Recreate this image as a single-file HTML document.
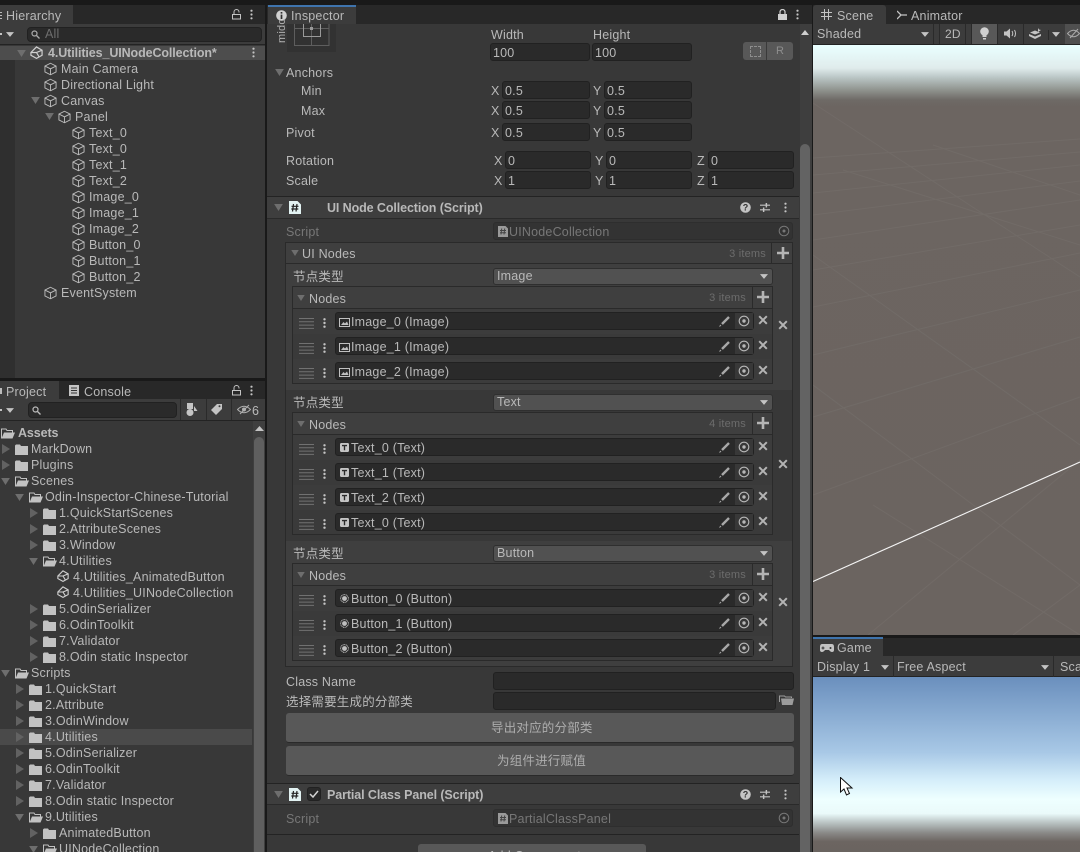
<!DOCTYPE html>
<html><head><meta charset="utf-8"><style>
html,body{margin:0;padding:0;background:#191919}
#r{position:relative;width:1080px;height:852px;overflow:hidden;background:#191919;font:12.5px/16px "Liberation Sans","Noto Sans CJK SC",sans-serif;color:#b9b9b9}
#r div,#r svg,#r span{position:absolute}
.t{white-space:nowrap;letter-spacing:.2px}
.b{font-weight:bold;letter-spacing:-.1px}
.d{color:#777}
.f{background:#2a2a2a;border:1px solid #212121;box-sizing:border-box;border-radius:3px}
.dis{background:#333;border:1px solid #2e2e2e;box-sizing:border-box;border-radius:3px}
.dd{background:#515151;border:1px solid #2f2f2f;box-sizing:border-box;border-radius:3px}
.h{background:#3f3f3f;box-sizing:border-box;border:1px solid #232323}
.btn{background:#585858;border-bottom:1px solid #2a2a2a;box-sizing:border-box;border-radius:3px}
</style></head><body><div id="r">
<svg width="0" height="0" style="left:0;top:0"><defs>
<symbol id="cube" viewBox="0 0 14 14"><path d="M7 .8 13 3.8v6.4L7 13.2 1 10.2V3.8zM1 3.8l6 3 6-3M7 6.8v6.4" fill="none" stroke="#bcbcbc" stroke-width="1"/></symbol>
<symbol id="down" viewBox="0 0 10 8"><path d="M0 0h10L5 8z" fill="#6e6e6e"/></symbol>
<symbol id="right" viewBox="0 0 8 10"><path d="M0 0v10l8-5z" fill="#626262"/></symbol>
<symbol id="wd" viewBox="0 0 10 6"><path d="M0 0h10L5 6z" fill="#c4c4c4"/></symbol>
<symbol id="fc" viewBox="0 0 13 11"><path d="M0 1.500 1 .5h4l1 1.500h7v9H0z" fill="#c2c2c2"/></symbol>
<symbol id="fo" viewBox="0 0 14 11"><path d="M.5 10.500V1h4.500l1 1.500h5.500V4.500" fill="none" stroke="#c2c2c2"/><path d="M3 4.500h11l-2.500 6H.5z" fill="#c2c2c2"/></symbol>
<symbol id="uni" viewBox="0 0 14 14"><path d="M7 1 13 4.500V10L7 13.300 1 10V7L7 1zM7 7 13 4.500M7 7l3 5M7 7H1" fill="none" stroke="#d0d0d0" stroke-width="1.300"/></symbol>
<symbol id="dots" viewBox="0 0 3 13"><circle cx="1.500" cy="2" r="1.300" fill="#c4c4c4"/><circle cx="1.500" cy="6.500" r="1.300" fill="#c4c4c4"/><circle cx="1.500" cy="11" r="1.300" fill="#c4c4c4"/></symbol>
<symbol id="lock" viewBox="0 0 9 11"><path d="M2 5V3a2.500 2.500 0 0 1 5 0v.5" fill="none" stroke="#c4c4c4"/><path d="M.5 5.500h8v4.500h-8z" fill="none" stroke="#c4c4c4"/></symbol>
<symbol id="lockf" viewBox="0 0 9 11"><path d="M2 5V3a2.500 2.500 0 0 1 5 0v2" fill="none" stroke="#d0d0d0" stroke-width="1.200"/><path d="M0 5h9v6H0z" fill="#d0d0d0"/></symbol>
<symbol id="x" viewBox="0 0 10 10"><path d="M1.200 1.200 8.800 8.800M8.800 1.200 1.200 8.800" stroke="#b4b4b4" stroke-width="2"/></symbol>
<symbol id="plus" viewBox="0 0 12 12"><path d="M6 0v12M0 6h12" stroke="#b4b4b4" stroke-width="2.600"/></symbol>
<symbol id="tg" viewBox="0 0 12 12"><circle cx="6" cy="6" r="4.800" fill="none" stroke="#b8b8b8" stroke-width="1.100"/><circle cx="6" cy="6" r="1.700" fill="#b8b8b8"/></symbol>
<symbol id="tgd" viewBox="0 0 12 12"><circle cx="6" cy="6" r="4.800" fill="none" stroke="#777" stroke-width="1"/><circle cx="6" cy="6" r="1.500" fill="#777"/></symbol>
<symbol id="pen" viewBox="0 0 12 12"><path d="M3 9 10 2" stroke="#a8a8a8" stroke-width="2.400"/><path d="M.5 11.500 2 10" stroke="#a8a8a8"/></symbol>
<symbol id="hd" viewBox="0 0 15 11"><path d="M0 .5h15M0 3.800h15M0 7.100h15M0 10.400h15" stroke="#717171"/></symbol>
<symbol id="idots" viewBox="0 0 3 10"><circle cx="1.500" cy="1.300" r="1.200" fill="#c4c4c4"/><circle cx="1.500" cy="5" r="1.200" fill="#c4c4c4"/><circle cx="1.500" cy="8.700" r="1.200" fill="#c4c4c4"/></symbol>
<symbol id="img" viewBox="0 0 11 9"><path d="M.5.500h10v8H.5z" fill="none" stroke="#c0c0c0"/><path d="M2 7l2.500-3 1.500 1.500L8 3.500 9.500 7z" fill="#c0c0c0"/></symbol>
<symbol id="ti" viewBox="0 0 10 10"><path d="M0 1 1 0h8l1 1v8l-1 1H1L0 9z" fill="#c4c4c4"/><path d="M2.200 2.800h5.600M5 2.800V8" stroke="#2a2a2a" stroke-width="1.500"/></symbol>
<symbol id="bi" viewBox="0 0 10 10"><circle cx="5" cy="5" r="4.300" fill="none" stroke="#c0c0c0" stroke-width="1" stroke-dasharray="1.200 .6"/><circle cx="5" cy="5" r="2.700" fill="#c0c0c0"/></symbol>
<symbol id="sc" viewBox="0 0 12 13"><path d="M0 0h8.500L12 3.500V13H0z" fill="#e2f2f2"/><path d="M4.500 3 3.500 10.500M8 3 7 10.500M2.500 5.300h7M2.300 8h7" stroke="#222" stroke-width="1.200"/></symbol>
<symbol id="scd" viewBox="0 0 10 11"><path d="M0 0h7.500L10 2.500V11H0z" fill="#9a9a9a"/><path d="M3.700 2.500 3 8.500M6.700 2.500 6 8.500M2 4.500h6M2 6.700h6" stroke="#444" stroke-width="1"/></symbol>
<symbol id="help" viewBox="0 0 11 11"><circle cx="5.500" cy="5.500" r="5.300" fill="#c4c4c4"/><text x="5.500" y="8.700" text-anchor="middle" font-size="9" font-weight="bold" font-family="Liberation Sans" fill="#333">?</text></symbol>
<symbol id="sl" viewBox="0 0 11 11"><path d="M0 3h11M0 8h11" stroke="#c4c4c4" stroke-width="1.200"/><path d="M7 .5v5M4 5.500v5" stroke="#c4c4c4" stroke-width="1.600"/></symbol>
<symbol id="info" viewBox="0 0 11 11"><circle cx="5.500" cy="5.500" r="5.300" fill="#d0d0d0"/><path d="M5.500 2v1.600M5.500 4.600V9" stroke="#2e2e2e" stroke-width="1.700"/></symbol>
</defs></svg>

<!-- ===== Hierarchy ===== -->
<div style="left:0;top:5px;width:265px;height:19px;background:#282828"></div>
<div style="left:0;top:5px;width:73px;height:19px;background:#3c3c3c"></div>
<svg style="left:0;top:12px" width="2" height="7" viewBox="0 0 2 7"><path d="M0 .5h2M0 3.500h2M0 6.500h2" stroke="#bbb"/></svg>
<div class="t" style="left:6px;top:8px">Hierarchy</div>
<svg style="left:232px;top:9px" width="9" height="11"><use href="#lock"/></svg>
<svg style="left:250px;top:9px" width="3" height="11"><use href="#dots"/></svg>
<div style="left:0;top:24px;width:265px;height:20px;background:#3c3c3c;border-bottom:1px solid #232323"></div>
<div style="left:0;top:33px;width:2px;height:2px;background:#c4c4c4"></div>
<svg style="left:6px;top:32px" width="8" height="5"><use href="#wd"/></svg>
<div class="f" style="left:27px;top:27px;width:235px;height:15px;border-radius:4px"></div>
<svg style="left:31px;top:30px" width="9" height="9" viewBox="0 0 9 9"><circle cx="3.500" cy="3.500" r="2.500" fill="none" stroke="#aaa" stroke-width="1.200"/><path d="M5.500 5.500 8.500 8.500" stroke="#aaa" stroke-width="1.300"/></svg>
<div class="t d" style="left:45px;top:26px;color:#6e6e6e">All</div>
<div style="left:0;top:45px;width:265px;height:333px;background:#383838"></div>
<div style="left:0;top:60px;width:15px;height:318px;background:#2f2f2f"></div>
<div style="left:0;top:46px;width:265px;height:14px;background:#4d4d4d"></div>
<svg style="left:17px;top:50px" width="9" height="7"><use href="#down"/></svg>
<svg style="left:30px;top:46px" width="13" height="13"><use href="#uni"/></svg>
<div class="t b" style="left:48px;top:45px">4.Utilities_UINodeCollection*</div>
<svg style="left:252px;top:47px" width="3" height="11"><use href="#dots"/></svg>

<svg style="left:44px;top:62px" width="13" height="14"><use href="#cube"/></svg><div class="t" style="left:61px;top:61px">Main Camera</div>
<svg style="left:44px;top:78px" width="13" height="14"><use href="#cube"/></svg><div class="t" style="left:61px;top:77px">Directional Light</div>
<svg style="left:31px;top:97px" width="9" height="7"><use href="#down"/></svg>
<svg style="left:44px;top:94px" width="13" height="14"><use href="#cube"/></svg><div class="t" style="left:61px;top:93px">Canvas</div>
<svg style="left:45px;top:113px" width="9" height="7"><use href="#down"/></svg>
<svg style="left:58px;top:110px" width="13" height="14"><use href="#cube"/></svg><div class="t" style="left:75px;top:109px">Panel</div>
<svg style="left:72px;top:126px" width="13" height="14"><use href="#cube"/></svg><div class="t" style="left:89px;top:125px">Text_0</div>
<svg style="left:72px;top:142px" width="13" height="14"><use href="#cube"/></svg><div class="t" style="left:89px;top:141px">Text_0</div>
<svg style="left:72px;top:158px" width="13" height="14"><use href="#cube"/></svg><div class="t" style="left:89px;top:157px">Text_1</div>
<svg style="left:72px;top:174px" width="13" height="14"><use href="#cube"/></svg><div class="t" style="left:89px;top:173px">Text_2</div>
<svg style="left:72px;top:190px" width="13" height="14"><use href="#cube"/></svg><div class="t" style="left:89px;top:189px">Image_0</div>
<svg style="left:72px;top:206px" width="13" height="14"><use href="#cube"/></svg><div class="t" style="left:89px;top:205px">Image_1</div>
<svg style="left:72px;top:222px" width="13" height="14"><use href="#cube"/></svg><div class="t" style="left:89px;top:221px">Image_2</div>
<svg style="left:72px;top:238px" width="13" height="14"><use href="#cube"/></svg><div class="t" style="left:89px;top:237px">Button_0</div>
<svg style="left:72px;top:254px" width="13" height="14"><use href="#cube"/></svg><div class="t" style="left:89px;top:253px">Button_1</div>
<svg style="left:72px;top:270px" width="13" height="14"><use href="#cube"/></svg><div class="t" style="left:89px;top:269px">Button_2</div>
<svg style="left:44px;top:286px" width="13" height="14"><use href="#cube"/></svg><div class="t" style="left:61px;top:285px">EventSystem</div>

<!-- ===== Project ===== -->
<div style="left:0;top:381px;width:265px;height:18px;background:#282828"></div>
<div style="left:0;top:381px;width:59px;height:18px;background:#3c3c3c"></div>
<div style="left:0;top:388px;width:2px;height:6px;background:#bbb"></div>
<div class="t" style="left:6px;top:384px">Project</div>
<svg style="left:69px;top:385px" width="10" height="11" viewBox="0 0 10 11"><path d="M0 0h10v11H0z" fill="#c4c4c4"/><path d="M2 3h6M2 5.500h6M2 8h6" stroke="#333"/></svg>
<div class="t" style="left:84px;top:384px">Console</div>
<svg style="left:232px;top:385px" width="9" height="11"><use href="#lock"/></svg>
<svg style="left:250px;top:385px" width="3" height="11"><use href="#dots"/></svg>
<div style="left:0;top:399px;width:265px;height:21px;background:#3c3c3c;border-bottom:1px solid #232323"></div>
<div style="left:0;top:409px;width:2px;height:2px;background:#c4c4c4"></div>
<svg style="left:6px;top:408px" width="8" height="5"><use href="#wd"/></svg>
<div class="f" style="left:28px;top:402px;width:149px;height:16px;border-radius:4px"></div>
<svg style="left:32px;top:406px" width="9" height="9" viewBox="0 0 9 9"><circle cx="3.500" cy="3.500" r="2.500" fill="none" stroke="#bbb" stroke-width="1.200"/><path d="M5.500 5.500 8.500 8.500" stroke="#bbb" stroke-width="1.300"/></svg>
<div style="left:180px;top:399px;width:1px;height:21px;background:#2a2a2a"></div>
<div style="left:206px;top:399px;width:1px;height:21px;background:#2a2a2a"></div>
<div style="left:231px;top:399px;width:1px;height:21px;background:#2a2a2a"></div>
<svg style="left:186px;top:403px" width="12" height="13" viewBox="0 0 12 13"><path d="M1 0h6v6H1z" fill="#c4c4c4"/><circle cx="4" cy="9.500" r="3.500" fill="#c4c4c4"/><path d="M8 3l3.500 5H8z" fill="#c4c4c4"/></svg>
<svg style="left:211px;top:403px" width="11" height="12" viewBox="0 0 11 12"><path d="M6 1h5v5l-6 6-5-5z" fill="#c4c4c4"/><circle cx="8.500" cy="3.300" r="1" fill="#3c3c3c"/></svg>
<svg style="left:237px;top:404px" width="14" height="11" viewBox="0 0 14 11"><path d="M.5 5.500Q7-1 13.500 5.500 7 12 .5 5.500zM3 10 12 1" fill="none" stroke="#b0b0b0"/><circle cx="7" cy="5.500" r="2" fill="#b0b0b0"/></svg>
<div class="t" style="left:252px;top:403px">6</div>

<div style="left:0;top:421px;width:265px;height:431px;background:#383838"></div>
<div style="left:0;top:729px;width:252px;height:16px;background:#4a4a4a"></div>
<div style="left:253px;top:421px;width:12px;height:431px;background:#3f3f3f"></div>
<svg style="left:255px;top:426px" width="9" height="5" viewBox="0 0 9 5"><path d="M0 5h9L4.500 0z" fill="#c4c4c4"/></svg>
<div style="left:254px;top:437px;width:10px;height:415px;background:#5f5f5f;border-radius:5px 5px 0 0"></div>

<svg style="left:1px;top:428px" width="14" height="11"><use href="#fo"/></svg><div class="t b" style="left:18px;top:425px">Assets</div>
<svg style="left:2px;top:444px" width="8" height="10"><use href="#right"/></svg><svg style="left:15px;top:444px" width="13" height="11"><use href="#fc"/></svg><div class="t" style="left:31px;top:441px">MarkDown</div>
<svg style="left:2px;top:460px" width="8" height="10"><use href="#right"/></svg><svg style="left:15px;top:460px" width="13" height="11"><use href="#fc"/></svg><div class="t" style="left:31px;top:457px">Plugins</div>
<svg style="left:1px;top:478px" width="9" height="7"><use href="#down"/></svg><svg style="left:15px;top:476px" width="14" height="11"><use href="#fo"/></svg><div class="t" style="left:31px;top:473px">Scenes</div>
<svg style="left:15px;top:494px" width="9" height="7"><use href="#down"/></svg><svg style="left:29px;top:492px" width="14" height="11"><use href="#fo"/></svg><div class="t" style="left:45px;top:489px">Odin-Inspector-Chinese-Tutorial</div>
<svg style="left:30px;top:508px" width="8" height="10"><use href="#right"/></svg><svg style="left:43px;top:508px" width="13" height="11"><use href="#fc"/></svg><div class="t" style="left:59px;top:505px">1.QuickStartScenes</div>
<svg style="left:30px;top:524px" width="8" height="10"><use href="#right"/></svg><svg style="left:43px;top:524px" width="13" height="11"><use href="#fc"/></svg><div class="t" style="left:59px;top:521px">2.AttributeScenes</div>
<svg style="left:30px;top:540px" width="8" height="10"><use href="#right"/></svg><svg style="left:43px;top:540px" width="13" height="11"><use href="#fc"/></svg><div class="t" style="left:59px;top:537px">3.Window</div>
<svg style="left:29px;top:558px" width="9" height="7"><use href="#down"/></svg><svg style="left:43px;top:556px" width="14" height="11"><use href="#fo"/></svg><div class="t" style="left:59px;top:553px">4.Utilities</div>
<svg style="left:57px;top:570px" width="12" height="12"><use href="#uni"/></svg><div class="t" style="left:73px;top:569px">4.Utilities_AnimatedButton</div>
<svg style="left:57px;top:586px" width="12" height="12"><use href="#uni"/></svg><div class="t" style="left:73px;top:585px">4.Utilities_UINodeCollection</div>
<svg style="left:30px;top:604px" width="8" height="10"><use href="#right"/></svg><svg style="left:43px;top:604px" width="13" height="11"><use href="#fc"/></svg><div class="t" style="left:59px;top:601px">5.OdinSerializer</div>
<svg style="left:30px;top:620px" width="8" height="10"><use href="#right"/></svg><svg style="left:43px;top:620px" width="13" height="11"><use href="#fc"/></svg><div class="t" style="left:59px;top:617px">6.OdinToolkit</div>
<svg style="left:30px;top:636px" width="8" height="10"><use href="#right"/></svg><svg style="left:43px;top:636px" width="13" height="11"><use href="#fc"/></svg><div class="t" style="left:59px;top:633px">7.Validator</div>
<svg style="left:30px;top:652px" width="8" height="10"><use href="#right"/></svg><svg style="left:43px;top:652px" width="13" height="11"><use href="#fc"/></svg><div class="t" style="left:59px;top:649px">8.Odin static Inspector</div>
<svg style="left:1px;top:670px" width="9" height="7"><use href="#down"/></svg><svg style="left:15px;top:668px" width="14" height="11"><use href="#fo"/></svg><div class="t" style="left:31px;top:665px">Scripts</div>
<svg style="left:16px;top:684px" width="8" height="10"><use href="#right"/></svg><svg style="left:29px;top:684px" width="13" height="11"><use href="#fc"/></svg><div class="t" style="left:45px;top:681px">1.QuickStart</div>
<svg style="left:16px;top:700px" width="8" height="10"><use href="#right"/></svg><svg style="left:29px;top:700px" width="13" height="11"><use href="#fc"/></svg><div class="t" style="left:45px;top:697px">2.Attribute</div>
<svg style="left:16px;top:716px" width="8" height="10"><use href="#right"/></svg><svg style="left:29px;top:716px" width="13" height="11"><use href="#fc"/></svg><div class="t" style="left:45px;top:713px">3.OdinWindow</div>
<svg style="left:16px;top:732px" width="8" height="10"><use href="#right"/></svg><svg style="left:29px;top:732px" width="13" height="11"><use href="#fc"/></svg><div class="t" style="left:45px;top:729px">4.Utilities</div>
<svg style="left:16px;top:748px" width="8" height="10"><use href="#right"/></svg><svg style="left:29px;top:748px" width="13" height="11"><use href="#fc"/></svg><div class="t" style="left:45px;top:745px">5.OdinSerializer</div>
<svg style="left:16px;top:764px" width="8" height="10"><use href="#right"/></svg><svg style="left:29px;top:764px" width="13" height="11"><use href="#fc"/></svg><div class="t" style="left:45px;top:761px">6.OdinToolkit</div>
<svg style="left:16px;top:780px" width="8" height="10"><use href="#right"/></svg><svg style="left:29px;top:780px" width="13" height="11"><use href="#fc"/></svg><div class="t" style="left:45px;top:777px">7.Validator</div>
<svg style="left:16px;top:796px" width="8" height="10"><use href="#right"/></svg><svg style="left:29px;top:796px" width="13" height="11"><use href="#fc"/></svg><div class="t" style="left:45px;top:793px">8.Odin static Inspector</div>
<svg style="left:15px;top:814px" width="9" height="7"><use href="#down"/></svg><svg style="left:29px;top:812px" width="14" height="11"><use href="#fo"/></svg><div class="t" style="left:45px;top:809px">9.Utilities</div>
<svg style="left:30px;top:828px" width="8" height="10"><use href="#right"/></svg><svg style="left:43px;top:828px" width="13" height="11"><use href="#fc"/></svg><div class="t" style="left:59px;top:825px">AnimatedButton</div>
<svg style="left:29px;top:846px" width="9" height="7"><use href="#down"/></svg><svg style="left:43px;top:844px" width="14" height="11"><use href="#fo"/></svg><div class="t" style="left:59px;top:841px">UINodeCollection</div>

<!-- ===== Inspector ===== -->
<div style="left:267px;top:5px;width:545px;height:19px;background:#282828"></div>
<div style="left:268px;top:5px;width:88px;height:19px;background:#3c3c3c;border-top:2px solid #3f74ad;box-sizing:border-box"></div>
<svg style="left:276px;top:10px" width="11" height="11"><use href="#info"/></svg>
<div class="t" style="left:291px;top:8px">Inspector</div>
<svg style="left:778px;top:9px" width="9" height="11"><use href="#lockf"/></svg>
<svg style="left:796px;top:9px" width="3" height="11"><use href="#dots"/></svg>
<div style="left:267px;top:24px;width:545px;height:828px;background:#383838"></div>
<div style="left:800px;top:24px;width:12px;height:828px;background:#3e3e3e"></div>
<svg style="left:801px;top:30px" width="8" height="5" viewBox="0 0 8 5"><path d="M0 5h8L4 0z" fill="#d0d0d0"/></svg>
<div style="left:800px;top:144px;width:10px;height:708px;background:#636363;border-radius:5px 5px 0 0"></div>

<div style="left:287px;top:24px;width:49px;height:28px;background:#323232"></div>
<svg style="left:294px;top:24px" width="36" height="22" viewBox="0 0 36 22"><path d="M.5 0v21.500h34.500V0M0 4.500h35M17.500 0v21.500" fill="none" stroke="#5e5e5e"/><path d="M9.500 0v12.500h17V0" fill="none" stroke="#9a9a9a"/><rect x="16" y="3" width="3" height="3" fill="#9a9a9a"/></svg>
<div class="t" style="left:273px;top:26px;transform:rotate(-90deg);transform-origin:center;width:18px;font-size:11px;color:#b0b0b0;text-align:center;line-height:16px">midc</div>

<div class="t" style="left:491px;top:27px">Width</div>
<div class="t" style="left:593px;top:27px">Height</div>
<div class="f" style="left:490px;top:43px;width:100px;height:18px"></div><div class="t" style="left:493px;top:45px">100</div>
<div class="f" style="left:592px;top:43px;width:100px;height:18px"></div><div class="t" style="left:595px;top:45px">100</div>
<div style="left:743px;top:42px;width:50px;height:18px;background:#585858;border-radius:3px"></div>
<div style="left:766px;top:42px;width:1px;height:18px;background:#3a3a3a"></div>
<div style="left:750px;top:46px;width:9px;height:9px;border:1px dashed #8e8e8e"></div>
<div class="t" style="left:776px;top:43px;color:#8e8e8e;font-size:11px">R</div>

<svg style="left:275px;top:69px" width="9" height="7"><use href="#down"/></svg>
<div class="t" style="left:286px;top:65px">Anchors</div>
<div class="t" style="left:301px;top:83px">Min</div>
<div class="t" style="left:301px;top:103px">Max</div>
<div class="t" style="left:286px;top:125px">Pivot</div>
<div class="t" style="left:286px;top:153px">Rotation</div>
<div class="t" style="left:286px;top:173px">Scale</div>

<div class="t" style="left:491px;top:83px">X</div><div class="f" style="left:502px;top:81px;width:88px;height:18px"></div><div class="t" style="left:505px;top:83px">0.5</div>
<div class="t" style="left:593px;top:83px">Y</div><div class="f" style="left:604px;top:81px;width:88px;height:18px"></div><div class="t" style="left:607px;top:83px">0.5</div>
<div class="t" style="left:491px;top:103px">X</div><div class="f" style="left:502px;top:101px;width:88px;height:18px"></div><div class="t" style="left:505px;top:103px">0.5</div>
<div class="t" style="left:593px;top:103px">Y</div><div class="f" style="left:604px;top:101px;width:88px;height:18px"></div><div class="t" style="left:607px;top:103px">0.5</div>
<div class="t" style="left:491px;top:125px">X</div><div class="f" style="left:502px;top:123px;width:88px;height:18px"></div><div class="t" style="left:505px;top:125px">0.5</div>
<div class="t" style="left:593px;top:125px">Y</div><div class="f" style="left:604px;top:123px;width:88px;height:18px"></div><div class="t" style="left:607px;top:125px">0.5</div>

<div class="t" style="left:494px;top:153px">X</div><div class="f" style="left:505px;top:151px;width:86px;height:18px"></div><div class="t" style="left:508px;top:153px">0</div>
<div class="t" style="left:595px;top:153px">Y</div><div class="f" style="left:606px;top:151px;width:86px;height:18px"></div><div class="t" style="left:609px;top:153px">0</div>
<div class="t" style="left:697px;top:153px">Z</div><div class="f" style="left:708px;top:151px;width:86px;height:18px"></div><div class="t" style="left:711px;top:153px">0</div>
<div class="t" style="left:494px;top:173px">X</div><div class="f" style="left:505px;top:171px;width:86px;height:18px"></div><div class="t" style="left:508px;top:173px">1</div>
<div class="t" style="left:595px;top:173px">Y</div><div class="f" style="left:606px;top:171px;width:86px;height:18px"></div><div class="t" style="left:609px;top:173px">1</div>
<div class="t" style="left:697px;top:173px">Z</div><div class="f" style="left:708px;top:171px;width:86px;height:18px"></div><div class="t" style="left:711px;top:173px">1</div>

<!-- component header -->
<div style="left:267px;top:196px;width:532px;height:23px;background:#3e3e3e;border-top:1px solid #232323;border-bottom:1px solid #2a2a2a;box-sizing:border-box"></div>
<svg style="left:274px;top:204px" width="9" height="7"><use href="#down"/></svg>
<svg style="left:289px;top:201px" width="12" height="13"><use href="#sc"/></svg>
<div class="t b" style="left:327px;top:200px">UI Node Collection (Script)</div>
<svg style="left:740px;top:202px" width="11" height="11"><use href="#help"/></svg>
<svg style="left:760px;top:202px" width="10" height="11"><use href="#sl"/></svg>
<svg style="left:784px;top:202px" width="3" height="11"><use href="#dots"/></svg>

<div class="t d" style="left:286px;top:224px">Script</div>
<div class="dis" style="left:493px;top:222px;width:300px;height:18px"></div>
<svg style="left:498px;top:226px" width="10" height="11"><use href="#scd"/></svg>
<div class="t d" style="left:509px;top:224px">UINodeCollection</div>
<svg style="left:778px;top:225px" width="12" height="12"><use href="#tgd"/></svg>

<!-- UI Nodes outer -->
<div style="left:285px;top:242px;width:508px;height:425px;background:#3a3a3a;border:1px solid #2a2a2a;box-sizing:border-box"></div>
<div class="h" style="left:285px;top:242px;width:508px;height:22px;border-color:#2a2a2a"></div>
<svg style="left:291px;top:250px" width="8" height="6"><use href="#down"/></svg>
<div class="t" style="left:302px;top:246px">UI Nodes</div>
<div class="t d" style="right:314px;top:246px;font-size:11px;color:#6c6c6c">3 items</div>
<div style="left:771px;top:243px;width:1px;height:20px;background:#2a2a2a"></div>
<svg style="left:777px;top:247px" width="12" height="12"><use href="#plus"/></svg>

<!-- section backgrounds -->
<div style="left:286px;top:264px;width:506px;height:126px;background:#3f3f3f"></div>
<div style="left:286px;top:390px;width:506px;height:151px;background:#383838"></div>
<div style="left:286px;top:541px;width:506px;height:125px;background:#3f3f3f"></div>

<!-- group 1 -->
<div class="t" style="left:293px;top:269px">节点类型</div>
<div class="dd" style="left:493px;top:268px;width:280px;height:17px"></div>
<div class="t" style="left:497px;top:268px">Image</div>
<svg style="left:760px;top:274px" width="8" height="5"><use href="#wd"/></svg>
<div style="left:292px;top:286px;width:481px;height:98px;background:#3c3c3c;border:1px solid #2a2a2a;box-sizing:border-box"></div>
<div class="h" style="left:292px;top:286px;width:481px;height:23px;border-color:#2a2a2a"></div>
<svg style="left:297px;top:295px" width="8" height="6"><use href="#down"/></svg>
<div class="t" style="left:309px;top:291px">Nodes</div>
<div class="t" style="right:334px;top:290px;font-size:11px;color:#6c6c6c">3 items</div>
<div style="left:752px;top:287px;width:1px;height:21px;background:#2a2a2a"></div>
<svg style="left:757px;top:291px" width="12" height="12"><use href="#plus"/></svg>
<div style="left:293px;top:334px;width:479px;height:25px;background:#3a3a3a"></div>
<!-- rows -->
<svg style="left:299px;top:318px" width="15" height="11"><use href="#hd"/></svg><svg style="left:323px;top:318px" width="3" height="10"><use href="#idots"/></svg>
<div class="f" style="left:335px;top:312px;width:419px;height:18px"></div><div style="left:735px;top:313px;width:18px;height:16px;background:#383838"></div>
<svg style="left:339px;top:318px" width="11" height="9"><use href="#img"/></svg><div class="t" style="left:351px;top:314px">Image_0 (Image)</div>
<svg style="left:719px;top:315px" width="12" height="12"><use href="#pen"/></svg><svg style="left:738px;top:315px" width="12" height="12"><use href="#tg"/></svg><svg style="left:758px;top:315px" width="10" height="10"><use href="#x"/></svg>

<svg style="left:299px;top:343px" width="15" height="11"><use href="#hd"/></svg><svg style="left:323px;top:343px" width="3" height="10"><use href="#idots"/></svg>
<div class="f" style="left:335px;top:337px;width:419px;height:18px"></div><div style="left:735px;top:338px;width:18px;height:16px;background:#383838"></div>
<svg style="left:339px;top:343px" width="11" height="9"><use href="#img"/></svg><div class="t" style="left:351px;top:339px">Image_1 (Image)</div>
<svg style="left:719px;top:340px" width="12" height="12"><use href="#pen"/></svg><svg style="left:738px;top:340px" width="12" height="12"><use href="#tg"/></svg><svg style="left:758px;top:340px" width="10" height="10"><use href="#x"/></svg>

<svg style="left:299px;top:368px" width="15" height="11"><use href="#hd"/></svg><svg style="left:323px;top:368px" width="3" height="10"><use href="#idots"/></svg>
<div class="f" style="left:335px;top:362px;width:419px;height:18px"></div><div style="left:735px;top:363px;width:18px;height:16px;background:#383838"></div>
<svg style="left:339px;top:368px" width="11" height="9"><use href="#img"/></svg><div class="t" style="left:351px;top:364px">Image_2 (Image)</div>
<svg style="left:719px;top:365px" width="12" height="12"><use href="#pen"/></svg><svg style="left:738px;top:365px" width="12" height="12"><use href="#tg"/></svg><svg style="left:758px;top:365px" width="10" height="10"><use href="#x"/></svg>
<svg style="left:778px;top:320px" width="10" height="10"><use href="#x"/></svg>

<!-- group 2 -->
<div class="t" style="left:293px;top:395px">节点类型</div>
<div class="dd" style="left:493px;top:394px;width:280px;height:17px"></div>
<div class="t" style="left:497px;top:394px">Text</div>
<svg style="left:760px;top:400px" width="8" height="5"><use href="#wd"/></svg>
<div style="left:292px;top:412px;width:481px;height:123px;background:#3c3c3c;border:1px solid #2a2a2a;box-sizing:border-box"></div>
<div class="h" style="left:292px;top:412px;width:481px;height:23px;border-color:#2a2a2a"></div>
<svg style="left:297px;top:421px" width="8" height="6"><use href="#down"/></svg>
<div class="t" style="left:309px;top:417px">Nodes</div>
<div class="t" style="right:334px;top:416px;font-size:11px;color:#6c6c6c">4 items</div>
<div style="left:752px;top:413px;width:1px;height:21px;background:#2a2a2a"></div>
<svg style="left:757px;top:417px" width="12" height="12"><use href="#plus"/></svg>
<div style="left:293px;top:460px;width:479px;height:25px;background:#3a3a3a"></div>
<div style="left:293px;top:510px;width:479px;height:24px;background:#3a3a3a"></div>

<svg style="left:299px;top:444px" width="15" height="11"><use href="#hd"/></svg><svg style="left:323px;top:444px" width="3" height="10"><use href="#idots"/></svg>
<div class="f" style="left:335px;top:438px;width:419px;height:18px"></div><div style="left:735px;top:439px;width:18px;height:16px;background:#383838"></div>
<svg style="left:340px;top:443px" width="9" height="9"><use href="#ti"/></svg><div class="t" style="left:351px;top:440px">Text_0 (Text)</div>
<svg style="left:719px;top:441px" width="12" height="12"><use href="#pen"/></svg><svg style="left:738px;top:441px" width="12" height="12"><use href="#tg"/></svg><svg style="left:758px;top:441px" width="10" height="10"><use href="#x"/></svg>

<svg style="left:299px;top:469px" width="15" height="11"><use href="#hd"/></svg><svg style="left:323px;top:469px" width="3" height="10"><use href="#idots"/></svg>
<div class="f" style="left:335px;top:463px;width:419px;height:18px"></div><div style="left:735px;top:464px;width:18px;height:16px;background:#383838"></div>
<svg style="left:340px;top:468px" width="9" height="9"><use href="#ti"/></svg><div class="t" style="left:351px;top:465px">Text_1 (Text)</div>
<svg style="left:719px;top:466px" width="12" height="12"><use href="#pen"/></svg><svg style="left:738px;top:466px" width="12" height="12"><use href="#tg"/></svg><svg style="left:758px;top:466px" width="10" height="10"><use href="#x"/></svg>

<svg style="left:299px;top:494px" width="15" height="11"><use href="#hd"/></svg><svg style="left:323px;top:494px" width="3" height="10"><use href="#idots"/></svg>
<div class="f" style="left:335px;top:488px;width:419px;height:18px"></div><div style="left:735px;top:489px;width:18px;height:16px;background:#383838"></div>
<svg style="left:340px;top:493px" width="9" height="9"><use href="#ti"/></svg><div class="t" style="left:351px;top:490px">Text_2 (Text)</div>
<svg style="left:719px;top:491px" width="12" height="12"><use href="#pen"/></svg><svg style="left:738px;top:491px" width="12" height="12"><use href="#tg"/></svg><svg style="left:758px;top:491px" width="10" height="10"><use href="#x"/></svg>

<svg style="left:299px;top:519px" width="15" height="11"><use href="#hd"/></svg><svg style="left:323px;top:519px" width="3" height="10"><use href="#idots"/></svg>
<div class="f" style="left:335px;top:513px;width:419px;height:18px"></div><div style="left:735px;top:514px;width:18px;height:16px;background:#383838"></div>
<svg style="left:340px;top:518px" width="9" height="9"><use href="#ti"/></svg><div class="t" style="left:351px;top:515px">Text_0 (Text)</div>
<svg style="left:719px;top:516px" width="12" height="12"><use href="#pen"/></svg><svg style="left:738px;top:516px" width="12" height="12"><use href="#tg"/></svg><svg style="left:758px;top:516px" width="10" height="10"><use href="#x"/></svg>
<svg style="left:778px;top:459px" width="10" height="10"><use href="#x"/></svg>

<!-- group 3 -->
<div class="t" style="left:293px;top:546px">节点类型</div>
<div class="dd" style="left:493px;top:545px;width:280px;height:17px"></div>
<div class="t" style="left:497px;top:545px">Button</div>
<svg style="left:760px;top:551px" width="8" height="5"><use href="#wd"/></svg>
<div style="left:292px;top:563px;width:481px;height:98px;background:#3c3c3c;border:1px solid #2a2a2a;box-sizing:border-box"></div>
<div class="h" style="left:292px;top:563px;width:481px;height:23px;border-color:#2a2a2a"></div>
<svg style="left:297px;top:572px" width="8" height="6"><use href="#down"/></svg>
<div class="t" style="left:309px;top:568px">Nodes</div>
<div class="t" style="right:334px;top:567px;font-size:11px;color:#6c6c6c">3 items</div>
<div style="left:752px;top:564px;width:1px;height:21px;background:#2a2a2a"></div>
<svg style="left:757px;top:568px" width="12" height="12"><use href="#plus"/></svg>
<div style="left:293px;top:611px;width:479px;height:25px;background:#3a3a3a"></div>

<svg style="left:299px;top:595px" width="15" height="11"><use href="#hd"/></svg><svg style="left:323px;top:595px" width="3" height="10"><use href="#idots"/></svg>
<div class="f" style="left:335px;top:589px;width:419px;height:18px"></div><div style="left:735px;top:590px;width:18px;height:16px;background:#383838"></div>
<svg style="left:340px;top:594px" width="9" height="9"><use href="#bi"/></svg><div class="t" style="left:351px;top:591px">Button_0 (Button)</div>
<svg style="left:719px;top:592px" width="12" height="12"><use href="#pen"/></svg><svg style="left:738px;top:592px" width="12" height="12"><use href="#tg"/></svg><svg style="left:758px;top:592px" width="10" height="10"><use href="#x"/></svg>

<svg style="left:299px;top:620px" width="15" height="11"><use href="#hd"/></svg><svg style="left:323px;top:620px" width="3" height="10"><use href="#idots"/></svg>
<div class="f" style="left:335px;top:614px;width:419px;height:18px"></div><div style="left:735px;top:615px;width:18px;height:16px;background:#383838"></div>
<svg style="left:340px;top:619px" width="9" height="9"><use href="#bi"/></svg><div class="t" style="left:351px;top:616px">Button_1 (Button)</div>
<svg style="left:719px;top:617px" width="12" height="12"><use href="#pen"/></svg><svg style="left:738px;top:617px" width="12" height="12"><use href="#tg"/></svg><svg style="left:758px;top:617px" width="10" height="10"><use href="#x"/></svg>

<svg style="left:299px;top:645px" width="15" height="11"><use href="#hd"/></svg><svg style="left:323px;top:645px" width="3" height="10"><use href="#idots"/></svg>
<div class="f" style="left:335px;top:639px;width:419px;height:18px"></div><div style="left:735px;top:640px;width:18px;height:16px;background:#383838"></div>
<svg style="left:340px;top:644px" width="9" height="9"><use href="#bi"/></svg><div class="t" style="left:351px;top:641px">Button_2 (Button)</div>
<svg style="left:719px;top:642px" width="12" height="12"><use href="#pen"/></svg><svg style="left:738px;top:642px" width="12" height="12"><use href="#tg"/></svg><svg style="left:758px;top:642px" width="10" height="10"><use href="#x"/></svg>
<svg style="left:778px;top:597px" width="10" height="10"><use href="#x"/></svg>

<!-- bottom fields -->
<div class="t" style="left:286px;top:674px">Class Name</div>
<div class="f" style="left:493px;top:672px;width:301px;height:18px"></div>
<div class="t" style="left:286px;top:694px">选择需要生成的分部类</div>
<div class="f" style="left:493px;top:692px;width:283px;height:18px"></div>
<svg style="left:779px;top:695px" width="15" height="10" viewBox="0 0 15 10"><path d="M.5 7V1h5l1 1h6v1" fill="none" stroke="#9c9c9c"/><path d="M2 3.500h13l-1.500 6.500H3z" fill="#9c9c9c"/></svg>
<div class="btn" style="left:286px;top:713px;width:508px;height:30px"></div>
<div class="t" style="left:491px;top:720px;color:#adadad">导出对应的分部类</div>
<div class="btn" style="left:286px;top:746px;width:508px;height:30px"></div>
<div class="t" style="left:497px;top:753px;color:#adadad">为组件进行赋值</div>

<div style="left:267px;top:783px;width:532px;height:22px;background:#3e3e3e;border-top:1px solid #232323;border-bottom:1px solid #2a2a2a;box-sizing:border-box"></div>
<svg style="left:274px;top:791px" width="9" height="7"><use href="#down"/></svg>
<svg style="left:289px;top:788px" width="12" height="13"><use href="#sc"/></svg>
<div class="f" style="left:307px;top:787px;width:14px;height:14px"></div>
<svg style="left:309px;top:790px" width="10" height="8" viewBox="0 0 10 8"><path d="M1 4l3 3 5-6" fill="none" stroke="#d4d4d4" stroke-width="1.500"/></svg>
<div class="t b" style="left:327px;top:787px">Partial Class Panel (Script)</div>
<svg style="left:740px;top:789px" width="11" height="11"><use href="#help"/></svg>
<svg style="left:760px;top:789px" width="10" height="11"><use href="#sl"/></svg>
<svg style="left:784px;top:789px" width="3" height="11"><use href="#dots"/></svg>
<div class="t d" style="left:286px;top:811px">Script</div>
<div class="dis" style="left:493px;top:809px;width:300px;height:18px"></div>
<svg style="left:498px;top:813px" width="10" height="11"><use href="#scd"/></svg>
<div class="t d" style="left:509px;top:811px">PartialClassPanel</div>
<svg style="left:778px;top:812px" width="12" height="12"><use href="#tgd"/></svg>
<div style="left:267px;top:834px;width:532px;height:1px;background:#232323"></div>
<div style="left:418px;top:844px;width:228px;height:8px;background:#585858;border-radius:3px 3px 0 0"></div>
<div class="t" style="left:488px;top:848px">Add Component</div>

<!-- ===== Scene ===== -->
<div style="left:813px;top:5px;width:267px;height:19px;background:#282828"></div>
<div style="left:813px;top:5px;width:73px;height:19px;background:#3c3c3c;border-radius:3px 3px 0 0"></div>
<svg style="left:821px;top:9px" width="11" height="11" viewBox="0 0 11 11"><path d="M3.500 0v11M7.500 0v11M0 3.500h11M0 7.500h11" stroke="#c4c4c4" stroke-width="1"/></svg>
<div class="t" style="left:837px;top:8px">Scene</div>
<svg style="left:897px;top:10px" width="10" height="10" viewBox="0 0 10 10"><path d="M0 1 4 5 0 9M4 5h6" fill="none" stroke="#c4c4c4" stroke-width="1.300"/></svg>
<div class="t" style="left:911px;top:8px">Animator</div>
<div style="left:813px;top:24px;width:267px;height:21px;background:#3c3c3c;border-bottom:1px solid #232323;box-sizing:border-box"></div>
<div class="t" style="left:817px;top:26px">Shaded</div>
<svg style="left:921px;top:32px" width="8" height="5"><use href="#wd"/></svg>
<div style="left:933px;top:24px;width:1px;height:20px;background:#2a2a2a"></div>
<div style="left:939px;top:24px;width:1px;height:20px;background:#2a2a2a"></div>
<div style="left:965px;top:24px;width:1px;height:20px;background:#2a2a2a"></div>
<div style="left:971px;top:24px;width:1px;height:20px;background:#2a2a2a"></div>
<div class="t" style="left:945px;top:26px;font-size:12px">2D</div>
<div style="left:972px;top:24px;width:25px;height:20px;background:#585858"></div>
<svg style="left:980px;top:27px" width="9" height="13" viewBox="0 0 9 13"><circle cx="4.500" cy="4.500" r="4.300" fill="#d0d0d0"/><path d="M2.500 8h4v2h-4zM3 11h3v1.500H3z" fill="#d0d0d0"/></svg>
<div style="left:997px;top:24px;width:1px;height:20px;background:#2a2a2a"></div>
<svg style="left:1004px;top:28px" width="13" height="11" viewBox="0 0 13 11"><path d="M0 3.500h2.500L6 .5v10L2.500 7.500H0z" fill="#c4c4c4"/><path d="M8 3q1.500 2.500 0 5M10.500 2q2 3.500 0 7" fill="none" stroke="#c4c4c4"/></svg>
<div style="left:1023px;top:24px;width:1px;height:20px;background:#2a2a2a"></div>
<svg style="left:1029px;top:28px" width="13" height="12" viewBox="0 0 13 12"><path d="M0 6l6 2.500L12 6l0 2-6 3-6-3zM1 4.500l5-2 5 2-5 2z" fill="#c4c4c4"/><path d="M9 0l1 1.500L12 2l-1.500 1L9 4z" fill="#c4c4c4"/></svg>
<div style="left:1048px;top:30px;width:1px;height:10px;background:#2a2a2a"></div>
<svg style="left:1052px;top:32px" width="8" height="5"><use href="#wd"/></svg>
<div style="left:1065px;top:24px;width:15px;height:20px;background:#4f4f4f"></div>
<svg style="left:1067px;top:28px" width="13" height="11" viewBox="0 0 13 11"><path d="M.5 5.500Q6.500-1 12.500 5.500 6.500 12 .5 5.500zM3 10 11 1" fill="none" stroke="#aaa"/></svg>

<svg style="left:813px;top:45px" width="267" height="590" viewBox="0 0 267 590">
<defs><linearGradient id="sky" x1="0" y1="0" x2="0" y2="1"><stop offset="0" stop-color="#e9ffff"/><stop offset=".039" stop-color="#e0ecec"/><stop offset=".054" stop-color="#bcc8c8"/><stop offset=".076" stop-color="#90948f"/><stop offset=".093" stop-color="#6e6a66"/><stop offset=".105" stop-color="#6c6561"/><stop offset="1" stop-color="#6b6460"/></linearGradient></defs>
<rect width="267" height="590" fill="url(#sky)"/>
<g stroke="#7a7470" stroke-width="1" fill="none" opacity=".4">
<path d="M0 113 267 94M0 130 267 107M0 148 267 120M0 170 267 136M0 195 267 155M0 225 267 180M0 262 267 208M0 310 267 245M0 372 267 292M0 450 267 352M55 590 267 415M200 590 267 540"/>
<path d="M0 58 267 232M30 125 267 200M120 100 267 150M0 210 267 400M0 340 267 540M60 460 267 590"/>
</g>
<path d="M0 536.500 267 417" stroke="#f4f4f4" stroke-width="1.100"/>
</svg>

<!-- ===== Game ===== -->
<div style="left:813px;top:638px;width:267px;height:18px;background:#282828"></div>
<div style="left:813px;top:637px;width:70px;height:19px;background:#3c3c3c;border-top:2px solid #3f74ad;box-sizing:border-box"></div>
<svg style="left:820px;top:644px" width="14" height="8" viewBox="0 0 14 8"><path d="M2 0h10q2 0 2 3v3q0 2-2 2-1.500 0-3-2H5Q3.500 8 2 8 0 8 0 6V3q0-3 2-3z" fill="#c4c4c4"/><path d="M3 2.500v3M1.500 4h3" stroke="#333"/><circle cx="10.500" cy="4" r="1" fill="#333"/></svg>
<div class="t" style="left:837px;top:640px">Game</div>
<div style="left:813px;top:656px;width:267px;height:21px;background:#3c3c3c;border-bottom:1px solid #232323;box-sizing:border-box"></div>
<div class="t" style="left:817px;top:659px">Display 1</div>
<svg style="left:881px;top:665px" width="8" height="5"><use href="#wd"/></svg>
<div style="left:893px;top:656px;width:1px;height:21px;background:#2a2a2a"></div>
<div class="t" style="left:897px;top:659px">Free Aspect</div>
<svg style="left:1041px;top:665px" width="8" height="5"><use href="#wd"/></svg>
<div style="left:1053px;top:656px;width:1px;height:21px;background:#2a2a2a"></div>
<div class="t" style="left:1060px;top:659px">Scale</div>
<div style="left:813px;top:677px;width:267px;height:175px;background:linear-gradient(180deg,#6a8fbd 0,#a8c8e6 43%,#d5eefa 59%,#eeffff 70%,#eafafa 78%,#bcc6c6 83%,#8a8a88 89%,#6c6561 94%,#6a6460 100%)"></div>
<svg style="left:840px;top:777px" width="14" height="20" viewBox="0 0 14 20"><path d="M.5.500V15L4 12l2.500 6 3-1.500L7 11h5z" fill="#fff" stroke="#111" stroke-width="1"/></svg>
</div></body></html>
